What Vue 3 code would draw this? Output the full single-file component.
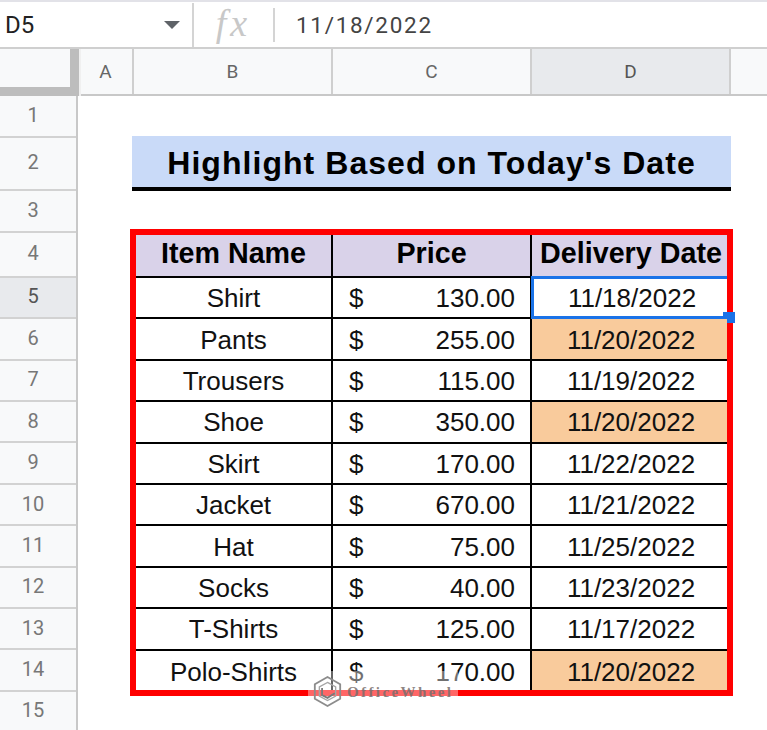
<script setup>
const columns = [
  { label: 'A', width: 55 },
  { label: 'B', width: 199 },
  { label: 'C', width: 199 },
  { label: 'D', width: 199, active: true },
  { label: '', width: 37 }
]
const rowHeads = [
  { n: 1, h: 41.7 }, { n: 2, h: 53.3 }, { n: 3, h: 41.7 }, { n: 4, h: 45 },
  { n: 5, h: 41.6, active: true }, { n: 6, h: 41.4 }, { n: 7, h: 41.4 }, { n: 8, h: 41.4 },
  { n: 9, h: 41.4 }, { n: 10, h: 41.4 }, { n: 11, h: 41.4 }, { n: 12, h: 41.4 },
  { n: 13, h: 41.4 }, { n: 14, h: 41.4 }, { n: 15, h: 41 }
]
const items = [
  ['Shirt', '130.00', '11/18/2022', false],
  ['Pants', '255.00', '11/20/2022', true],
  ['Trousers', '115.00', '11/19/2022', false],
  ['Shoe', '350.00', '11/20/2022', true],
  ['Skirt', '170.00', '11/22/2022', false],
  ['Jacket', '670.00', '11/21/2022', false],
  ['Hat', '75.00', '11/25/2022', false],
  ['Socks', '40.00', '11/23/2022', false],
  ['T-Shirts', '125.00', '11/17/2022', false],
  ['Polo-Shirts', '170.00', '11/20/2022', true]
]
</script>

<template>
  <div class="app">
    <div class="formula-bar">
      <div class="name-box">
        <span class="cell-name">D5</span>
        <span class="caret"></span>
      </div>
      <span class="sep tall"></span>
      <span class="fx">fx</span>
      <span class="sep"></span>
      <span class="formula">11/18/2022</span>
    </div>

    <div class="col-heads">
      <div class="corner"></div>
      <div
        v-for="c in columns"
        :key="c.label"
        class="col-head"
        :class="{ active: c.active }"
        :style="{ width: c.width + 'px' }"
      >{{ c.label }}</div>
    </div>

    <div class="body">
      <div class="row-heads">
        <div
          v-for="r in rowHeads"
          :key="r.n"
          class="row-head"
          :class="{ active: r.active }"
          :style="{ height: r.h + 'px' }"
        >{{ r.n }}</div>
      </div>

      <div class="sheet">
        <div class="title">Highlight Based on Today's Date</div>

        <div class="table">
          <div class="cell head">Item Name</div>
          <div class="cell head">Price</div>
          <div class="cell head last">Delivery Date</div>
          <template v-for="(it, i) in items" :key="it[0]">
            <div class="cell" :class="{ bottom: i === items.length - 1 }">{{ it[0] }}</div>
            <div class="cell price" :class="{ bottom: i === items.length - 1 }">
              <span>$</span><span>{{ it[1] }}</span>
            </div>
            <div
              class="cell last"
              :class="{ hot: it[3], selected: i === 0, bottom: i === items.length - 1 }"
            >
              {{ it[2] }}
              <span v-if="i === 0" class="handle"></span>
            </div>
          </template>
        </div>

        <div class="watermark">
          <svg class="wm-logo" viewBox="0 0 32 36" width="29" height="33">
            <path d="M16 2 L30 10 V26 L16 34 L2 26 V10 Z" fill="none" stroke="#8c8c8c" stroke-width="2" />
            <path d="M16 8 L25 13 V23 L16 28 L7 23 V13 Z" fill="none" stroke="#a5a5a5" stroke-width="1.5" />
            <path d="M10 14 V22 L16 25 L24 20" fill="none" stroke="#7a7a7a" stroke-width="2" />
          </svg>
          <span class="wm-text">OfficeWheel</span>
        </div>
      </div>
    </div>
  </div>
</template>

<style scoped>
.app {
  width: 767px;
  height: 730px;
  overflow: hidden;
  background: #fff;
  font-family: "Liberation Sans", Arial, sans-serif;
  color: #111;
}
.formula-bar {
  height: 45px;
  border-top: 2px solid #e2e2e8;
  display: flex;
  align-items: center;
  background: #fff;
}
.name-box {
  width: 192px;
  height: 100%;
  display: flex;
  align-items: center;
  justify-content: space-between;
  padding: 0 12px 0 5px;
  box-sizing: border-box;
}
.cell-name {
  font-family: Roboto, sans-serif;
  font-size: 24px;
  color: #222;
}
.caret {
  width: 0;
  height: 0;
  border-left: 8px solid transparent;
  border-right: 8px solid transparent;
  border-top: 8px solid #5f6368;
}
.sep {
  width: 2px;
  height: 34px;
  background: #d4d4d4;
}
.sep.tall { height: 44px; }
.fx {
  width: 79px;
  padding-bottom: 4px;
  text-align: center;
  font-family: "Liberation Serif", serif;
  font-style: italic;
  font-size: 38px;
  letter-spacing: 4px;
  color: #c8c8c8;
  line-height: 1;
}
.formula {
  margin-left: 21px;
  font-family: Roboto, sans-serif;
  font-size: 22.5px;
  letter-spacing: 1.7px;
  color: #444;
}
.col-heads {
  display: flex;
  height: 49px;
  box-sizing: border-box;
  border-top: 2px solid #cfcfcf;
  border-bottom: 2px solid #c8c8c8;
  background: #f8f9fa;
}
.corner {
  width: 79px;
  box-sizing: border-box;
  flex: none;
  border-right: 9px solid #bdbdbd;
  border-bottom: 9px solid #bdbdbd;
  margin-bottom: -2px;
  box-shadow: 2px 0 0 #f0f0f0;
}
.col-head {
  flex: none;
  box-sizing: border-box;
  border-right: 2px solid #cfcfcf;
  display: flex;
  align-items: center;
  justify-content: center;
  font-family: Roboto, sans-serif;
  font-size: 19px;
  color: #666;
}
.col-head:last-child { border-right: 0; }
.col-head.active { background: #e8eaed; color: #555; }
.body {
  display: flex;
  height: 634px;
  overflow: hidden;
}
.row-heads {
  width: 78px;
  flex: none;
  box-sizing: border-box;
  border-right: 2px solid #c8c8c8;
  background: #f8f9fa;
}
.row-head {
  box-sizing: border-box;
  border-bottom: 2px solid #d2d2d2;
  padding: 0 10px 2px 0;
  display: flex;
  align-items: center;
  justify-content: center;
  font-family: Roboto, sans-serif;
  font-size: 20px;
  color: #777;
}
.row-head.active { background: #e8eaed; color: #555; }
.sheet {
  position: relative;
  flex: 1;
  padding: 40px 0 0 52px;
}
.title {
  width: 599px;
  margin-left: 2px;
  height: 55px;
  box-sizing: border-box;
  padding-top: 3px;
  background: #c9daf8;
  border-bottom: 4px solid #000;
  display: flex;
  align-items: center;
  justify-content: center;
  font-weight: 700;
  font-size: 32px;
  letter-spacing: 1.05px;
  color: #000;
}
.table {
  margin-top: 38px;
  width: 603px;
  box-sizing: border-box;
  border: 6px solid #ff0000;
  display: grid;
  grid-template-columns: 197px 199px 195px;
  grid-template-rows: 43px repeat(9, 41.4px) 39.4px;
}
.cell {
  box-sizing: border-box;
  border-right: 2px solid #000;
  border-bottom: 2px solid #000;
  padding-top: 2px;
  display: flex;
  align-items: center;
  justify-content: center;
  font-size: 26px;
  color: #111;
  position: relative;
}
.cell.last { border-right: 0; padding-left: 3px; }
.cell.bottom { border-bottom: 0; padding-top: 4px; }
.head {
  background: #d9d2e9;
  font-weight: 700;
  font-size: 28.7px;
  color: #000;
  padding-top: 0;
  padding-bottom: 5px;
}
.price {
  justify-content: space-between;
  padding: 2px 15px 0 16px;
}
.hot { background: #f9cb9c; }
.selected {
  border: 3px solid #1a73e8;
  border-right: 0;
  margin-top: -2px;
  margin-left: -1px;
}
.handle {
  position: absolute;
  right: -8px;
  bottom: -7px;
  width: 12px;
  height: 11px;
  background: #1a73e8;
}
.watermark {
  position: absolute;
  left: 230px;
  top: 575px;
  width: 150px;
  height: 27px;
  display: flex;
  align-items: flex-start;
  gap: 5px;
  background: rgba(255, 255, 255, 0.4);
}
.wm-logo {
  flex: none;
  margin: 4px 0 0 5px;
}
.wm-text {
  margin-top: 13px;
  font-family: "Liberation Serif", serif;
  font-weight: 700;
  font-size: 15px;
  letter-spacing: 2.4px;
  color: rgba(120, 110, 110, 0.85);
}
</style>
